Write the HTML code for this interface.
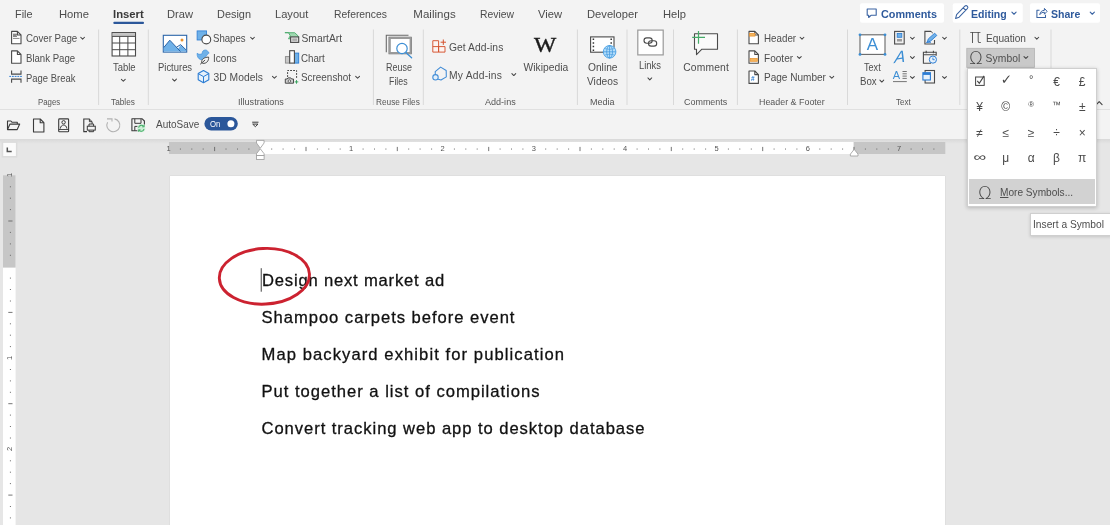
<!DOCTYPE html><html><head><meta charset="utf-8"><title>Word - Insert Symbol</title><style>
*{margin:0;padding:0;box-sizing:border-box}
html,body{width:1110px;height:525px;overflow:hidden;background:#e6e6e6}
body{position:relative;font-family:"Liberation Sans",sans-serif;color:#444}
.t{position:absolute;white-space:nowrap;color:#4e4e4e}
.tab{color:#4c4c4c}
.sel{color:#383838;font-weight:bold}
.btn{color:#2f5a9c;font-weight:bold}
.lbl{color:#555}
.doc{color:#111;-webkit-text-stroke:0.3px #111}
.rn{color:#555}
.om{color:#444;font-family:"DejaVu Sans Light","DejaVu Sans","Liberation Sans",sans-serif;font-weight:200}
.sym{position:absolute;width:26px;text-align:center;color:#4a4a4a;font-family:"Liberation Sans","DejaVu Sans",sans-serif}
.bg{position:absolute}
svg{position:absolute;left:0;top:0}
</style></head><body>
<div class="bg" style="left:0;top:0;width:1110px;height:139px;background:#f3f3f3"></div>
<div class="bg" style="left:0;top:109px;width:1110px;height:1px;background:#e0e0e0"></div>
<div class="bg" style="left:0;top:139px;width:1110px;height:5px;background:linear-gradient(#d9d9d9,#e6e6e6)"></div>
<div class="bg" style="left:169.700px;top:175.500px;width:775.400px;height:349.500px;background:#fff;box-shadow:0 0 1px rgba(0,0,0,.18)"></div>
<svg width="1110" height="525" viewBox="0 0 1110 525" style="will-change:transform"><rect x="860" y="3.3" width="84" height="19.4" rx="2" fill="#fff"/>
<rect x="952.7" y="3.3" width="70.0" height="19.4" rx="2" fill="#fff"/>
<rect x="1030" y="3.3" width="70" height="19.4" rx="2" fill="#fff"/>
<path d="M867.2 9h9v6.300h-5.200l-2.300 2.200v-2.200h-1.500z" fill="none" stroke="#3a63a2" stroke-width="1.1" stroke-linejoin="round"/>
<path d="M955.600 18.500l1-3.800 8.200-8.500a1.500 1.500 0 0 1 2.500 2.500l-8.200 8.500z M963.300 7.800l2.500 2.500" fill="none" stroke="#3a63a2" stroke-width="1.05" stroke-linejoin="round"/>
<path d="M1039.5 10.2h-2.6v7.2h8.6v-2.6" fill="none" stroke="#3a63a2" stroke-width="1.05" stroke-linejoin="round"/><path d="M1039.8 14.6c0.4-2.8 2.2-4.2 4.6-4.3v-1.9l2.7 2.9-2.7 2.9v-1.9c-2-0.1-3.500 0.700-4.600 2.300z" fill="none" stroke="#3a63a2" stroke-width="1" stroke-linejoin="round"/>
<path d="M1011.90 12.15L1014.00 14.25L1016.10 12.15" fill="none" stroke="#3a63a2" stroke-width="1.1" stroke-linecap="round" stroke-linejoin="round"/>
<path d="M1090.20 12.15L1092.30 14.25L1094.40 12.15" fill="none" stroke="#3a63a2" stroke-width="1.1" stroke-linecap="round" stroke-linejoin="round"/>
<rect x="113.3" y="21.7" width="30.7" height="2.4" rx="1" fill="#2b579a"/>
<rect x="98.1" y="29.5" width="1" height="75.5" fill="#d9d9d9"/>
<rect x="147.8" y="29.5" width="1" height="75.5" fill="#d9d9d9"/>
<rect x="372.9" y="29.5" width="1" height="75.5" fill="#d9d9d9"/>
<rect x="422.8" y="29.5" width="1" height="75.5" fill="#d9d9d9"/>
<rect x="576.9" y="29.5" width="1" height="75.5" fill="#d9d9d9"/>
<rect x="626.5" y="29.5" width="1" height="75.5" fill="#d9d9d9"/>
<rect x="673.0" y="29.5" width="1" height="75.5" fill="#d9d9d9"/>
<rect x="736.9" y="29.5" width="1" height="75.5" fill="#d9d9d9"/>
<rect x="847.0" y="29.5" width="1" height="75.5" fill="#d9d9d9"/>
<rect x="959.3" y="29.5" width="1" height="75.5" fill="#d9d9d9"/>
<rect x="1050.5" y="29.5" width="1" height="75.5" fill="#d9d9d9"/>
<path d="M1096.3 104.7L1099.2 101.6L1102.100 104.7" fill="none" stroke="#444" stroke-width="1.1" stroke-linecap="round" stroke-linejoin="round"/>
<path d="M11.6 31.4H17.4L21.0 35.0V43.8H11.6Z" fill="#fff" stroke="#4a4a4a" stroke-width="1.1" stroke-linejoin="round"/><path d="M17.4 31.4V35.0H21.0" fill="none" stroke="#4a4a4a" stroke-width="1.1" stroke-linejoin="round"/>
<path d="M13 34.6h4M13 36.5h4M13 38.4h6.500" stroke="#777" stroke-width="0.9"/><rect x="13" y="33.6" width="3.6" height="2.6" fill="#8a8a8a"/>
<path d="M11.6 50.9H17.4L21.0 54.5V63.3H11.6Z" fill="#fff" stroke="#4a4a4a" stroke-width="1.1" stroke-linejoin="round"/><path d="M17.4 50.9V54.5H21.0" fill="none" stroke="#4a4a4a" stroke-width="1.1" stroke-linejoin="round"/>
<path d="M11.6 70.5v3.6h9.4v-3.6M11.6 82.700v-3.6h9.4v3.600" fill="none" stroke="#4a4a4a" stroke-width="1.1"/><path d="M9.3 76.400H22.700" stroke="#2b7cd3" stroke-width="1" stroke-dasharray="1.8 0.9"/>
<path d="M80.70 37.25L82.60 39.15L84.50 37.25" fill="none" stroke="#444" stroke-width="1.05" stroke-linecap="round" stroke-linejoin="round"/>
<rect x="112.1" y="32.6" width="23.400" height="23.400" fill="#fff" stroke="#4a4a4a" stroke-width="1.1"/><rect x="112.600" y="33.100" width="22.400" height="3" fill="#c4c4c4"/><path d="M112.100 36.400h23.400M112.100 43h23.400M112.100 49.700h23.400M119.700 36.400v19.600M127.900 36.400v19.600" stroke="#4a4a4a" stroke-width="1" fill="none"/>
<path d="M121.40 79.35L123.30 81.25L125.20 79.35" fill="none" stroke="#444" stroke-width="1.05" stroke-linecap="round" stroke-linejoin="round"/>
<rect x="163.3" y="35.300" width="23.400" height="16.800" fill="#fff" stroke="#2a64a8" stroke-width="1.1"/><path d="M163.800 47.500L169.800 40.200L178 49L180.600 45L186.200 50.200V51.600H163.800Z" fill="#6fb1e8"/><path d="M163.800 47.500L169.800 40.200L180.500 51.600M176.400 47.300L180.600 44.600L186.200 50" fill="none" stroke="#2a64a8" stroke-width="1"/><circle cx="182" cy="40" r="1.500" fill="#e8912d"/>
<path d="M172.60 79.15L174.50 81.05L176.40 79.15" fill="none" stroke="#444" stroke-width="1.05" stroke-linecap="round" stroke-linejoin="round"/>
<rect x="197.100" y="30.900" width="9.500" height="9.100" fill="#6fb1e8" stroke="#2b7cd3" stroke-width="0.8"/><circle cx="206.300" cy="39.500" r="4.400" fill="#fff" stroke="#4a4a4a" stroke-width="1.1"/>
<path d="M250.60 37.25L252.50 39.15L254.40 37.25" fill="none" stroke="#444" stroke-width="1.05" stroke-linecap="round" stroke-linejoin="round"/>
<path d="M197.100 53.300C198.500 54.500 200.500 54.600 202.300 53.600C202 51.500 203.300 50 205.300 50C206.800 50 207.800 50.900 208 52L209.200 52.900L207.900 53.600C207.600 55 206.600 55.800 205.600 56.200C206.600 57.500 206 59.500 203 59.500L200.500 59.500C198.200 58.800 197 56.500 197.100 53.300Z" fill="#6fb1e8" stroke="#3f8fdc" stroke-width="0.700" stroke-linejoin="round"/><path d="M201.600 62.600C201.200 59.500 204 57.200 208.600 57.100C209 61 206.300 63.800 202.800 63.300Z" fill="#f3f3f3" stroke="#4a4a4a" stroke-width="1" stroke-linejoin="round"/><path d="M200.500 64L204.800 60.300" stroke="#4a4a4a" stroke-width="1" stroke-linecap="round"/>
<path d="M203.500 70.600L208.800 73.600V79.700L203.500 82.700L198.200 79.700V73.600Z" fill="#e6f1fb" stroke="#2b7cd3" stroke-width="1.1" stroke-linejoin="round"/><path d="M198.200 73.600L203.500 76.600L208.800 73.600M203.500 76.600V82.700" fill="none" stroke="#2b7cd3" stroke-width="1" stroke-linejoin="round"/>
<path d="M272.50 76.35L274.40 78.25L276.30 76.35" fill="none" stroke="#444" stroke-width="1.05" stroke-linecap="round" stroke-linejoin="round"/>
<path d="M284.900 32.700h9.800l3.600 3.400v2.700h-9.800l1.700-3.050-1.700-3.050z" fill="#9fd8b0" stroke="#3aa35f" stroke-width="0.800" stroke-linejoin="round"/><rect x="290.600" y="36.900" width="8.100" height="5.500" fill="#ddd" stroke="#4a4a4a" stroke-width="1.100"/><rect x="292.300" y="38.500" width="4.700" height="2.300" fill="#aaa"/>
<rect x="285.400" y="56.600" width="4.300" height="6.500" fill="#c8c8c8" stroke="#8a8a8a" stroke-width="0.9"/><rect x="294.400" y="53.100" width="4.300" height="10" fill="#6fb1e8" stroke="#2b7cd3" stroke-width="0.9"/><rect x="289.700" y="50.700" width="4.700" height="12.400" fill="#fff" stroke="#4a4a4a" stroke-width="1.1"/>
<path d="M287.600 77V70.500H296.600V79" fill="none" stroke="#4a4a4a" stroke-width="1" stroke-dasharray="1.900 1.100"/><path d="M285.300 79h1.900l0.800-1.100h2.800l0.800 1.100h1.900v4.200h-8.200z" fill="#d0d0d0" stroke="#4a4a4a" stroke-width="1" stroke-linejoin="round"/><circle cx="289.400" cy="81.100" r="1.300" fill="#f3f3f3" stroke="#4a4a4a" stroke-width="0.800"/><path d="M294.700 81.900h3.600M296.500 80.100v3.600" stroke="#3aa35f" stroke-width="1"/>
<path d="M355.70 76.35L357.60 78.25L359.50 76.35" fill="none" stroke="#444" stroke-width="1.05" stroke-linecap="round" stroke-linejoin="round"/>
<path d="M386.300 52.200V35.200H408.500" fill="none" stroke="#6a6a6a" stroke-width="1.100"/><rect x="390" y="38.200" width="20.400" height="14.600" fill="#fff" stroke="#9a9a9a" stroke-width="1.600"/><rect x="388.900" y="37.100" width="22.600" height="16.800" fill="none" stroke="#6a6a6a" stroke-width="0.700"/><path d="M405.800 52.600L411.600 57.700" stroke="#3c8ed4" stroke-width="1.300" stroke-linecap="round"/><circle cx="402" cy="48.500" r="5.200" fill="#fff" stroke="#3c8ed4" stroke-width="1.200"/>
<path d="M432.800 40.700h5.800v11.400h-5.800zM438.600 46.600h6.400v5.500h-6.400zM432.800 46.600h5.800" fill="#fdf4f1" stroke="#d4522e" stroke-width="0.950" stroke-linejoin="round"/><path d="M440.600 42.200h5.400M443.300 39.500v5.400" stroke="#d4522e" stroke-width="1"/>
<path d="M438.300 79.300L441 80L446.300 76.900L446.200 70.500L440.600 67.100L435.200 71.600L435.300 74.400" fill="none" stroke="#3f8bd6" stroke-width="1.050" stroke-linejoin="round" stroke-linecap="round"/><circle cx="435.500" cy="77.300" r="2.700" fill="#e3f0fb" stroke="#3f8bd6" stroke-width="1.050"/>
<path d="M511.90 73.65L513.80 75.55L515.70 73.65" fill="none" stroke="#444" stroke-width="1.05" stroke-linecap="round" stroke-linejoin="round"/>
<rect x="590.600" y="36.900" width="23.400" height="15.300" fill="#fff" stroke="#4a4a4a" stroke-width="1.100"/><path d="M593.400 38.600v13M611.200 38.600v7" stroke="#333" stroke-width="1.500" stroke-dasharray="1.500 2.100"/><circle cx="609.600" cy="51.800" r="6.300" fill="#b5defa" stroke="#48a0e4" stroke-width="0.900"/><ellipse cx="609.600" cy="51.800" rx="2.900" ry="6.300" fill="none" stroke="#3f97de" stroke-width="0.750"/><path d="M603.300 51.800h12.600M609.600 45.500v12.600" stroke="#3f97de" stroke-width="0.750" fill="none"/><path d="M604.600 48.600q5 1.600 10 0M604.600 55q5-1.600 10 0" stroke="#3f97de" stroke-width="0.600" fill="none"/>
<rect x="637.800" y="30.100" width="25.400" height="24.800" fill="#fff" stroke="#9a9a9a" stroke-width="1.200"/><rect x="644" y="37.900" width="8.200" height="5.400" rx="2.700" fill="none" stroke="#4a4a4a" stroke-width="1.100"/><rect x="648.500" y="40.700" width="8.200" height="5.400" rx="2.700" fill="none" stroke="#4a4a4a" stroke-width="1.100"/>
<path d="M647.90 77.95L649.80 79.85L651.70 77.95" fill="none" stroke="#444" stroke-width="1.05" stroke-linecap="round" stroke-linejoin="round"/>
<path d="M694.500 33.800h23v15.400h-15.600l-5.400 5.400v-5.400h-2z" fill="#fafafa" stroke="#4a4a4a" stroke-width="1.100" stroke-linejoin="round"/><path d="M692.200 37.300h12.800M698.500 30.900v12.800" stroke="#45ab68" stroke-width="1.200"/>
<path d="M749.0 31.4H754.8L758.4 35.0V43.8H749.0Z" fill="#fff" stroke="#4a4a4a" stroke-width="1.1" stroke-linejoin="round"/><path d="M754.8 31.4V35.0H758.4" fill="none" stroke="#4a4a4a" stroke-width="1.1" stroke-linejoin="round"/>
<rect x="749.600" y="33.300" width="5.400" height="2.800" fill="#f4b45c" stroke="#e8912d" stroke-width="0.700"/>
<path d="M749.0 50.9H754.8L758.4 54.5V63.3H749.0Z" fill="#fff" stroke="#4a4a4a" stroke-width="1.1" stroke-linejoin="round"/><path d="M754.8 50.9V54.5H758.4" fill="none" stroke="#4a4a4a" stroke-width="1.1" stroke-linejoin="round"/>
<rect x="750.200" y="58.400" width="7.100" height="2.900" fill="#f4b45c" stroke="#e8912d" stroke-width="0.700"/>
<path d="M749.0 71.0H754.8L758.4 74.6V83.4H749.0Z" fill="#fff" stroke="#4a4a4a" stroke-width="1.1" stroke-linejoin="round"/><path d="M754.8 71.0V74.6H758.4" fill="none" stroke="#4a4a4a" stroke-width="1.1" stroke-linejoin="round"/>
<text x="751" y="81.400" font-family="Liberation Sans, sans-serif" font-size="6.500" font-weight="bold" fill="#2b7cd3">#</text>
<path d="M800.10 37.25L802.00 39.15L803.90 37.25" fill="none" stroke="#444" stroke-width="1.05" stroke-linecap="round" stroke-linejoin="round"/>
<path d="M797.40 56.55L799.30 58.45L801.20 56.55" fill="none" stroke="#444" stroke-width="1.05" stroke-linecap="round" stroke-linejoin="round"/>
<path d="M829.90 76.35L831.80 78.25L833.70 76.35" fill="none" stroke="#444" stroke-width="1.05" stroke-linecap="round" stroke-linejoin="round"/>
<rect x="860" y="34.800" width="25" height="19.600" fill="#fff" stroke="#666" stroke-width="1.100"/>
<circle cx="860" cy="34.8" r="1.400" fill="#3c8ed4"/>
<circle cx="885" cy="34.8" r="1.400" fill="#3c8ed4"/>
<circle cx="860" cy="54.4" r="1.400" fill="#3c8ed4"/>
<circle cx="885" cy="54.4" r="1.400" fill="#3c8ed4"/>
<text x="872.500" y="50.400" font-family="Liberation Sans, sans-serif" font-size="17" text-anchor="middle" fill="#3c8ed4">A</text>
<path d="M879.90 80.15L881.80 82.05L883.70 80.15" fill="none" stroke="#444" stroke-width="1.05" stroke-linecap="round" stroke-linejoin="round"/>
<rect x="894.600" y="31.400" width="9.600" height="12.600" fill="#f0f0f0" stroke="#4a4a4a" stroke-width="1.100"/><rect x="897.200" y="33.500" width="4.600" height="3.800" fill="#6fb1e8" stroke="#2b7cd3" stroke-width="0.800"/><rect x="897" y="39" width="5" height="2.500" fill="#9a9a9a"/>
<path d="M910.50 37.25L912.40 39.15L914.30 37.25" fill="none" stroke="#444" stroke-width="1.05" stroke-linecap="round" stroke-linejoin="round"/>
<text x="0" y="0" font-family="Liberation Sans, sans-serif" font-size="16.500" fill="#3c8ed4" transform="translate(893.300 63.300) rotate(-7) skewX(-22)">A</text>
<path d="M910.50 56.65L912.40 58.55L914.30 56.65" fill="none" stroke="#444" stroke-width="1.05" stroke-linecap="round" stroke-linejoin="round"/>
<text x="892.800" y="78.500" font-family="Liberation Sans, sans-serif" font-size="11" fill="#3c8ed4">A</text><path d="M902.500 71.500h4.300M902.500 73.800h4.300M902.500 76.100h4.300M902.500 78.400h4.300M893 81.600h13.800" stroke="#666" stroke-width="0.900"/>
<path d="M910.50 76.55L912.40 78.45L914.30 76.55" fill="none" stroke="#444" stroke-width="1.05" stroke-linecap="round" stroke-linejoin="round"/>
<path d="M931 31.400h-6.100v12.600h9.600v-4" fill="none" stroke="#4a4a4a" stroke-width="1.100"/><path d="M931 31.400l1.800 1.700" stroke="#4a4a4a" stroke-width="1"/><path d="M927.200 42.300l1.100-3.400 6.400-5.700 2.100 2.300-6.400 5.700z" fill="#6fb1e8" stroke="#2b7cd3" stroke-width="0.900" stroke-linejoin="round"/><path d="M926 42.400h5" stroke="#2b7cd3" stroke-width="0.800"/>
<path d="M942.60 37.25L944.50 39.15L946.40 37.25" fill="none" stroke="#444" stroke-width="1.05" stroke-linecap="round" stroke-linejoin="round"/>
<path d="M931 63.200h-7.600v-11h12.800v3.500M923.400 54.800h12.800M926.200 50.800v2.400M933.400 50.800v2.400" fill="none" stroke="#4a4a4a" stroke-width="1.100"/><circle cx="932.900" cy="59.600" r="3.600" fill="#e6f1fb" stroke="#2b7cd3" stroke-width="1"/><path d="M932.900 57.600v2.100h1.800" fill="none" stroke="#2b7cd3" stroke-width="0.900"/>
<rect x="925.100" y="70.500" width="9.400" height="12.500" fill="#f3f3f3" stroke="#4a4a4a" stroke-width="1.100"/><rect x="922.900" y="72.700" width="7.500" height="7.300" fill="#e6f1fb" stroke="#2b7cd3" stroke-width="1.100"/><rect x="922.900" y="72.700" width="7.500" height="2.200" fill="#2b7cd3"/>
<path d="M942.60 76.55L944.50 78.45L946.40 76.55" fill="none" stroke="#444" stroke-width="1.05" stroke-linecap="round" stroke-linejoin="round"/>
<text x="969.600" y="42.600" font-family="DejaVu Sans Light, DejaVu Sans, Liberation Sans, sans-serif" font-weight="200" font-size="19.500" fill="#4a4a4a">π</text>
<path d="M1034.90 37.25L1036.80 39.15L1038.70 37.25" fill="none" stroke="#444" stroke-width="1.05" stroke-linecap="round" stroke-linejoin="round"/>
<rect x="966.800" y="48.300" width="67.800" height="19.200" fill="#c9c9c9" stroke="#b4b4b4" stroke-width="0.800"/>
<path d="M1024.00 56.55L1025.90 58.45L1027.80 56.55" fill="none" stroke="#444" stroke-width="1.05" stroke-linecap="round" stroke-linejoin="round"/>
<path d="M7.500 129.600V121h3.400l1.200 1.300h5.200v1.800" fill="none" stroke="#3a3a3a" stroke-width="1.100" stroke-linejoin="round"/><path d="M7.500 129.600l2.500-5.500h9.700l-2.500 5.500z" fill="none" stroke="#3a3a3a" stroke-width="1.100" stroke-linejoin="round"/>
<path d="M33.5 119.0H40.199999999999996L43.9 122.7V132.0H33.5Z" fill="none" stroke="#3a3a3a" stroke-width="1.1" stroke-linejoin="round"/><path d="M40.199999999999996 119.0V122.7H43.9" fill="none" stroke="#3a3a3a" stroke-width="1.1" stroke-linejoin="round"/>
<rect x="58.700" y="118.900" width="9.900" height="12.800" rx="0.800" fill="none" stroke="#3a3a3a" stroke-width="1.100"/><path d="M58.700 129.500h9.900" stroke="#3a3a3a" stroke-width="0.900"/><circle cx="63.600" cy="122.300" r="1.700" fill="none" stroke="#3a3a3a" stroke-width="1"/><path d="M60.300 128.600c0.300-2.300 1.600-3.500 3.300-3.500s3 1.200 3.300 3.500" fill="none" stroke="#3a3a3a" stroke-width="1" stroke-linejoin="round"/>
<path d="M89.400 119h-5.600v12.600h3.200" fill="none" stroke="#3a3a3a" stroke-width="1.100"/><path d="M89.400 119l2.700 2.700v2.300M89.400 119v2.700h2.700" fill="none" stroke="#3a3a3a" stroke-width="1"/><rect x="87.300" y="126.200" width="8" height="3.900" fill="#f3f3f3" stroke="#3a3a3a" stroke-width="1"/><path d="M89 126.200v-2.200h4.600v2.200M89 130.100v1.600h4.600v-1.600" fill="none" stroke="#3a3a3a" stroke-width="1"/>
<path d="M114.500 118.850a6.500 6.500 0 1 1-6.900 3.300" fill="none" stroke="#b2b2b2" stroke-width="1.100"/><path d="M107 118.900h5v2.600" fill="none" stroke="#b2b2b2" stroke-width="1.100"/>
<path d="M137.400 130.800h-5.500v-12h10.300l2.200 2.200v3.400" fill="none" stroke="#3a3a3a" stroke-width="1.100" stroke-linejoin="round"/><path d="M134.800 118.800v4.500h6.200v-4.500M134.800 130.800v-4.400h2.800" fill="none" stroke="#3a3a3a" stroke-width="1"/><circle cx="141.300" cy="128.300" r="4" fill="#cdeed6"/><path d="M138.600 127.600a2.900 2.900 0 0 1 5.100-1.200M144 129a2.900 2.900 0 0 1-5.100 1.200" fill="none" stroke="#45ad68" stroke-width="1.100"/><path d="M144.200 124.700v2.100h-2.100M138.400 131.900v-2.100h2.100" fill="none" stroke="#45ad68" stroke-width="0.900"/>
<rect x="204.400" y="117" width="33.400" height="13.600" rx="6.800" fill="#2b579a"/><circle cx="230.900" cy="123.800" r="3.500" fill="#fff"/>
<path d="M252.200 122.200h6.300" stroke="#3a3a3a" stroke-width="1"/><path d="M252.700 124.100l2.650 2.600 2.650-2.600z" fill="none" stroke="#3a3a3a" stroke-width="1" stroke-linejoin="round"/>
<rect x="1.600" y="141.200" width="15.800" height="16.400" fill="#dcdcdc"/><rect x="3.200" y="142.900" width="12.700" height="13.100" fill="#fbfbfb"/><path d="M7.300 147.600v4h4.400" fill="none" stroke="#555" stroke-width="1.500"/>
<rect x="168.800" y="142" width="776.700" height="12" fill="#fff"/><rect x="168.800" y="142" width="91.400" height="12" fill="#c6c6c6"/><rect x="853.600" y="142" width="91.900" height="12" fill="#c6c6c6"/>
<path d="M180.4 148.500v1.100M191.8 148.500v1.100M203.2 148.500v1.100M214.6 146.900v4.200M226.0 148.500v1.100M237.5 148.500v1.100M248.9 148.500v1.100M271.7 148.500v1.100M283.1 148.500v1.100M294.6 148.500v1.100M306.0 146.900v4.200M317.4 148.500v1.100M328.8 148.500v1.100M340.2 148.500v1.100M363.1 148.500v1.100M374.5 148.500v1.100M385.9 148.500v1.100M397.3 146.900v4.200M408.7 148.500v1.100M420.1 148.500v1.100M431.6 148.500v1.100M454.4 148.500v1.100M465.8 148.500v1.100M477.2 148.500v1.100M488.7 146.900v4.200M500.1 148.500v1.100M511.5 148.500v1.100M522.9 148.500v1.100M545.7 148.500v1.100M557.2 148.500v1.100M568.6 148.500v1.100M580.0 146.900v4.200M591.4 148.500v1.100M602.8 148.500v1.100M614.2 148.500v1.100M637.1 148.500v1.100M648.5 148.500v1.100M659.9 148.500v1.100M671.3 146.900v4.200M682.7 148.500v1.100M694.2 148.500v1.100M705.6 148.500v1.100M728.4 148.500v1.100M739.8 148.500v1.100M751.3 148.500v1.100M762.7 146.900v4.200M774.1 148.500v1.100M785.5 148.500v1.100M796.9 148.500v1.100M819.8 148.500v1.100M831.2 148.500v1.100M842.6 148.500v1.100M854.0 146.900v4.200M865.4 148.500v1.100M876.8 148.500v1.100M888.3 148.500v1.100M911.1 148.500v1.100M922.5 148.500v1.100M933.9 148.500v1.100" stroke="#666" stroke-width="0.900"/>
<rect x="3" y="175.200" width="12.600" height="349.800" fill="#fff"/><rect x="3" y="175.200" width="12.600" height="92.400" fill="#c6c6c6"/>
<path d="M9.900 186.8h1.100M9.900 198.2h1.100M9.900 209.6h1.100M8.300 221.0h4.200M9.900 232.4h1.100M9.900 243.9h1.100M9.900 255.3h1.100M9.900 278.1h1.100M9.900 289.5h1.100M9.900 301.0h1.100M8.300 312.4h4.200M9.900 323.8h1.100M9.900 335.2h1.100M9.900 346.6h1.100M9.900 369.5h1.100M9.900 380.9h1.100M9.900 392.3h1.100M8.300 403.7h4.200M9.900 415.1h1.100M9.900 426.5h1.100M9.900 438.0h1.100M9.900 460.8h1.100M9.900 472.2h1.100M9.900 483.6h1.100M8.300 495.1h4.200M9.900 506.5h1.100M9.900 517.9h1.100" stroke="#666" stroke-width="0.900"/>
<path d="M256.500 140.400h7.600v2.600l-3.800 5.200-3.800-5.200z" fill="#fff" stroke="#9a9a9a" stroke-width="0.800"/><path d="M260.300 148.800l3.800 4.900v1.900h-7.600v-1.900z" fill="#fff" stroke="#9a9a9a" stroke-width="0.800"/><rect x="256.500" y="155.600" width="7.600" height="3.800" fill="#fff" stroke="#9a9a9a" stroke-width="0.800"/><path d="M854.200 149.300l3.800 4.800v1.900h-7.600v-1.900z" fill="#fff" stroke="#9a9a9a" stroke-width="0.800"/></svg>
<div class="bg" style="left:966.600px;top:67.500px;width:130px;height:139px;background:#fff;border:1px solid #cfcfcf;box-shadow:0 1px 4px rgba(0,0,0,.22)"></div>
<div class="bg" style="left:968.500px;top:179px;width:126.200px;height:25.200px;background:#d2d2d2"></div>
<div class="bg" style="left:1029.800px;top:212.800px;width:82px;height:22.900px;background:#fff;border:1px solid #cfcfcf;box-shadow:0 1px 3px rgba(0,0,0,.15)"></div>
<svg width="1110" height="525" viewBox="0 0 1110 525" style="will-change:transform"><rect x="975.600" y="77" width="8.600" height="8.400" fill="#fff" stroke="#444" stroke-width="1"/><path d="M977.300 80.800l2 2.600 4.800-7.500" fill="none" stroke="#444" stroke-width="1.100"/></svg>
<div style="will-change:transform;position:absolute;left:0;top:0;width:1110px;height:525px">
<span class="t tab" id="t0" style="left:14.5px;top:6.0px;font-size:11.5px;line-height:16px;transform:scaleX(0.9444);transform-origin:0 50%;">File</span>
<span class="t tab" id="t1" style="left:59.3px;top:6.0px;font-size:11.5px;line-height:16px;transform:scaleX(0.9776);transform-origin:0 50%;">Home</span>
<span class="t tab" id="t2" style="left:166.7px;top:6.0px;font-size:11.5px;line-height:16px;transform:scaleX(0.9686);transform-origin:0 50%;">Draw</span>
<span class="t tab" id="t3" style="left:216.7px;top:6.0px;font-size:11.5px;line-height:16px;transform:scaleX(0.9494);transform-origin:0 50%;">Design</span>
<span class="t tab" id="t4" style="left:275.3px;top:6.0px;font-size:11.5px;line-height:16px;transform:scaleX(0.9672);transform-origin:0 50%;">Layout</span>
<span class="t tab" id="t5" style="left:334.3px;top:6.0px;font-size:11.5px;line-height:16px;transform:scaleX(0.9012);transform-origin:0 50%;">References</span>
<span class="t tab" id="t6" style="left:413.3px;top:6.0px;font-size:11.5px;line-height:16px;letter-spacing:0.030px;">Mailings</span>
<span class="t tab" id="t7" style="left:480.0px;top:6.0px;font-size:11.5px;line-height:16px;transform:scaleX(0.9014);transform-origin:0 50%;">Review</span>
<span class="t tab" id="t8" style="left:538.3px;top:6.0px;font-size:11.5px;line-height:16px;transform:scaleX(0.9709);transform-origin:0 50%;">View</span>
<span class="t tab" id="t9" style="left:586.7px;top:6.0px;font-size:11.5px;line-height:16px;transform:scaleX(0.9729);transform-origin:0 50%;">Developer</span>
<span class="t tab" id="t10" style="left:662.7px;top:6.0px;font-size:11.5px;line-height:16px;transform:scaleX(0.9723);transform-origin:0 50%;">Help</span>
<span class="t tab sel" id="t11" style="left:113.3px;top:6.0px;font-size:11.5px;line-height:16px;transform:scaleX(0.9800);transform-origin:0 50%;">Insert</span>
<span class="t btn" id="t12" style="left:880.7px;top:5.8px;font-size:11.5px;line-height:16px;transform:scaleX(0.9422);transform-origin:0 50%;">Comments</span>
<span class="t btn" id="t13" style="left:971.0px;top:5.8px;font-size:11.5px;line-height:16px;transform:scaleX(0.9161);transform-origin:0 50%;">Editing</span>
<span class="t btn" id="t14" style="left:1050.7px;top:5.8px;font-size:11.5px;line-height:16px;transform:scaleX(0.9165);transform-origin:0 50%;">Share</span>
<span class="t " id="t15" style="left:25.6px;top:32.3px;font-size:10.3px;line-height:14px;transform:scaleX(0.9413);transform-origin:0 50%;">Cover Page</span>
<span class="t " id="t16" style="left:25.6px;top:51.9px;font-size:10.3px;line-height:14px;transform:scaleX(0.9322);transform-origin:0 50%;">Blank Page</span>
<span class="t " id="t17" style="left:25.6px;top:71.6px;font-size:10.3px;line-height:14px;transform:scaleX(0.9180);transform-origin:0 50%;">Page Break</span>
<span class="t lbl" id="t18" style="left:38.0px;top:96.1px;font-size:9.3px;line-height:13px;transform:scaleX(0.8417);transform-origin:0 50%;">Pages</span>
<span class="t " id="t19" style="left:112.7px;top:61.0px;font-size:10.3px;line-height:14px;transform:scaleX(0.9178);transform-origin:0 50%;">Table</span>
<span class="t lbl" id="t20" style="left:111.0px;top:96.1px;font-size:9.3px;line-height:13px;transform:scaleX(0.8893);transform-origin:0 50%;">Tables</span>
<span class="t " id="t21" style="left:157.9px;top:61.0px;font-size:10.3px;line-height:14px;transform:scaleX(0.9166);transform-origin:0 50%;">Pictures</span>
<span class="t " id="t22" style="left:213.4px;top:32.3px;font-size:10.3px;line-height:14px;transform:scaleX(0.9331);transform-origin:0 50%;">Shapes</span>
<span class="t " id="t23" style="left:213.4px;top:51.6px;font-size:10.3px;line-height:14px;transform:scaleX(0.9584);transform-origin:0 50%;">Icons</span>
<span class="t " id="t24" style="left:213.4px;top:71.4px;font-size:10.3px;line-height:14px;letter-spacing:0.048px;">3D Models</span>
<span class="t " id="t25" style="left:301.4px;top:32.3px;font-size:10.3px;line-height:14px;letter-spacing:0.025px;">SmartArt</span>
<span class="t " id="t26" style="left:301.4px;top:51.6px;font-size:10.3px;line-height:14px;transform:scaleX(0.9449);transform-origin:0 50%;">Chart</span>
<span class="t " id="t27" style="left:301.4px;top:71.4px;font-size:10.3px;line-height:14px;transform:scaleX(0.9617);transform-origin:0 50%;">Screenshot</span>
<span class="t lbl" id="t28" style="left:237.6px;top:96.1px;font-size:9.3px;line-height:13px;transform:scaleX(0.9759);transform-origin:0 50%;">Illustrations</span>
<span class="t " id="t29" style="left:385.5px;top:61.0px;font-size:10.3px;line-height:14px;transform:scaleX(0.8701);transform-origin:0 50%;">Reuse</span>
<span class="t " id="t30" style="left:389.0px;top:75.2px;font-size:10.3px;line-height:14px;transform:scaleX(0.8552);transform-origin:0 50%;">Files</span>
<span class="t lbl" id="t31" style="left:376.0px;top:96.1px;font-size:9.3px;line-height:13px;transform:scaleX(0.8922);transform-origin:0 50%;">Reuse Files</span>
<span class="t " id="t32" style="left:448.9px;top:41.1px;font-size:10.3px;line-height:14px;letter-spacing:0.059px;">Get Add-ins</span>
<span class="t " id="t33" style="left:448.9px;top:68.8px;font-size:10.3px;line-height:14px;letter-spacing:0.240px;">My Add-ins</span>
<span class="t " id="t34" style="left:534.2px;top:28.8px;font-size:22px;line-height:31px;font-family:'Liberation Serif',serif;color:#1a1a1a;-webkit-text-stroke:0.45px #1a1a1a;transform:scaleX(1.07);transform-origin:left;">W</span>
<span class="t " id="t35" style="left:523.5px;top:61.0px;font-size:10.3px;line-height:14px;letter-spacing:0.007px;">Wikipedia</span>
<span class="t lbl" id="t36" style="left:484.9px;top:96.1px;font-size:9.3px;line-height:13px;transform:scaleX(0.9736);transform-origin:0 50%;">Add-ins</span>
<span class="t " id="t37" style="left:587.5px;top:61.0px;font-size:10.3px;line-height:14px;transform:scaleX(0.9911);transform-origin:0 50%;">Online</span>
<span class="t " id="t38" style="left:586.7px;top:75.2px;font-size:10.3px;line-height:14px;transform:scaleX(0.9900);transform-origin:0 50%;">Videos</span>
<span class="t lbl" id="t39" style="left:589.6px;top:96.1px;font-size:9.3px;line-height:13px;transform:scaleX(0.9713);transform-origin:0 50%;">Media</span>
<span class="t " id="t40" style="left:639.3px;top:59.3px;font-size:10.3px;line-height:14px;transform:scaleX(0.9107);transform-origin:0 50%;">Links</span>
<span class="t " id="t41" style="left:683.2px;top:61.0px;font-size:10.3px;line-height:14px;letter-spacing:0.160px;">Comment</span>
<span class="t lbl" id="t42" style="left:683.7px;top:96.1px;font-size:9.3px;line-height:13px;transform:scaleX(0.9632);transform-origin:0 50%;">Comments</span>
<span class="t " id="t43" style="left:763.7px;top:32.3px;font-size:10.3px;line-height:14px;transform:scaleX(0.9502);transform-origin:0 50%;">Header</span>
<span class="t " id="t44" style="left:763.7px;top:51.6px;font-size:10.3px;line-height:14px;transform:scaleX(0.9776);transform-origin:0 50%;">Footer</span>
<span class="t " id="t45" style="left:763.7px;top:71.4px;font-size:10.3px;line-height:14px;transform:scaleX(0.9743);transform-origin:0 50%;">Page Number</span>
<span class="t lbl" id="t46" style="left:759.0px;top:96.1px;font-size:9.3px;line-height:13px;transform:scaleX(0.9559);transform-origin:0 50%;">Header & Footer</span>
<span class="t " id="t47" style="left:864.2px;top:61.0px;font-size:10.3px;line-height:14px;transform:scaleX(0.8840);transform-origin:0 50%;">Text</span>
<span class="t " id="t48" style="left:859.8px;top:75.2px;font-size:10.3px;line-height:14px;transform:scaleX(0.9408);transform-origin:0 50%;">Box</span>
<span class="t lbl" id="t49" style="left:896.1px;top:96.1px;font-size:9.3px;line-height:13px;transform:scaleX(0.8557);transform-origin:0 50%;">Text</span>
<span class="t " id="t50" style="left:985.6px;top:32.3px;font-size:10.3px;line-height:14px;transform:scaleX(0.9839);transform-origin:0 50%;">Equation</span>
<span class="t " id="t51" style="left:985.6px;top:51.8px;font-size:10.3px;line-height:14px;letter-spacing:0.091px;">Symbol</span>
<span class="t " id="t52" style="left:156.0px;top:118.4px;font-size:10.3px;line-height:14px;transform:scaleX(0.9696);transform-origin:0 50%;">AutoSave</span>
<span class="t " id="t53" style="left:210.2px;top:118.2px;font-size:8.3px;line-height:12px;transform:scaleX(0.9388);transform-origin:0 50%;color:#fff;">On</span>
<span class="t " id="t54" style="left:1000.2px;top:186.0px;font-size:10.3px;line-height:14px;transform:scaleX(0.9827);transform-origin:0 50%;"><u>M</u>ore Symbols...</span>
<span class="t " id="t55" style="left:1033.0px;top:218.1px;font-size:10.3px;line-height:14px;transform:scaleX(0.9924);transform-origin:0 50%;">Insert a Symbol</span>
<span class="t doc" id="t56" style="left:262.0px;top:269.0px;font-size:16.6px;line-height:23px;letter-spacing:0.808px;">Design next market ad</span>
<span class="t doc" id="t57" style="left:261.5px;top:306.0px;font-size:16.6px;line-height:23px;letter-spacing:0.965px;">Shampoo carpets before event</span>
<span class="t doc" id="t58" style="left:261.5px;top:343.0px;font-size:16.6px;line-height:23px;letter-spacing:1.079px;">Map backyard exhibit for publication</span>
<span class="t doc" id="t59" style="left:261.5px;top:380.0px;font-size:16.6px;line-height:23px;letter-spacing:0.987px;">Put together a list of compilations</span>
<span class="t doc" id="t60" style="left:261.5px;top:417.0px;font-size:16.6px;line-height:23px;letter-spacing:0.948px;">Convert tracking web app to desktop database</span>
<span class="t rn" id="t61" style="left:166.4px;top:143.6px;font-size:7.5px;line-height:10px;">1</span>
<span class="t rn" id="t62" style="left:349.0px;top:143.6px;font-size:7.5px;line-height:10px;">1</span>
<span class="t rn" id="t63" style="left:440.4px;top:143.6px;font-size:7.5px;line-height:10px;">2</span>
<span class="t rn" id="t64" style="left:531.7px;top:143.6px;font-size:7.5px;line-height:10px;">3</span>
<span class="t rn" id="t65" style="left:623.1px;top:143.6px;font-size:7.5px;line-height:10px;">4</span>
<span class="t rn" id="t66" style="left:714.4px;top:143.6px;font-size:7.5px;line-height:10px;">5</span>
<span class="t rn" id="t67" style="left:805.7px;top:143.6px;font-size:7.5px;line-height:10px;">6</span>
<span class="t rn" id="t68" style="left:897.1px;top:143.6px;font-size:7.5px;line-height:10px;">7</span>
<span class="t rn" id="t69" style="left:8.2px;top:170.4px;font-size:7.5px;line-height:10px;transform:rotate(-90deg);transform-origin:50% 50%;">1</span>
<span class="t rn" id="t70" style="left:8.2px;top:353.0px;font-size:7.5px;line-height:10px;transform:rotate(-90deg);transform-origin:50% 50%;">1</span>
<span class="t rn" id="t71" style="left:8.2px;top:444.4px;font-size:7.5px;line-height:10px;transform:rotate(-90deg);transform-origin:50% 50%;">2</span>
<span class="t om" id="t72" style="left:969.1px;top:44.8px;font-size:18px;line-height:25px;">Ω</span>
<span class="t om" id="t73" style="left:978.0px;top:180.2px;font-size:18px;line-height:25px;">Ω</span>
<span class="sym" style="left:992.7px;top:72.4px;font-size:13.5px;line-height:16px;transform:translateX(0.8px);">✓</span>
<span class="sym" style="left:1018.1px;top:71.2px;font-size:11px;line-height:16px;">°</span>
<span class="sym" style="left:1043.5px;top:73.9px;font-size:12px;line-height:16px;">€</span>
<span class="sym" style="left:1069.2px;top:73.9px;font-size:12px;line-height:16px;">£</span>
<span class="sym" style="left:966.6px;top:98.8px;font-size:12px;line-height:16px;">¥</span>
<span class="sym" style="left:992.7px;top:98.8px;font-size:12px;line-height:16px;">©</span>
<span class="sym" style="left:1018.1px;top:97.0px;font-size:8px;line-height:16px;">®</span>
<span class="sym" style="left:1043.5px;top:96.6px;font-size:9px;line-height:16px;">™</span>
<span class="sym" style="left:1069.2px;top:98.8px;font-size:12px;line-height:16px;">±</span>
<span class="sym" style="left:966.6px;top:124.7px;font-size:12px;line-height:16px;">≠</span>
<span class="sym" style="left:992.7px;top:124.7px;font-size:12px;line-height:16px;">≤</span>
<span class="sym" style="left:1018.1px;top:124.7px;font-size:12px;line-height:16px;">≥</span>
<span class="sym" style="left:1043.5px;top:124.7px;font-size:12px;line-height:16px;">÷</span>
<span class="sym" style="left:1069.2px;top:124.7px;font-size:12px;line-height:16px;">×</span>
<span class="sym" style="left:966.6px;top:149.1px;font-size:15px;line-height:16px;transform:scale(1.2,.78);">∞</span>
<span class="sym" style="left:992.7px;top:149.7px;font-size:12px;line-height:16px;">μ</span>
<span class="sym" style="left:1018.1px;top:149.7px;font-size:12px;line-height:16px;">α</span>
<span class="sym" style="left:1043.5px;top:149.7px;font-size:12px;line-height:16px;">β</span>
<span class="sym" style="left:1069.2px;top:149.7px;font-size:12px;line-height:16px;">π</span>
</div>
<svg width="1110" height="525" viewBox="0 0 1110 525"><rect x="260.700" y="268.200" width="1.100" height="23.500" fill="#555"/><ellipse cx="264.400" cy="276.300" rx="45.100" ry="27.800" fill="none" stroke="#cc2230" stroke-width="2.900" transform="rotate(-3 264.400 276.300)"/></svg>
</body></html>
